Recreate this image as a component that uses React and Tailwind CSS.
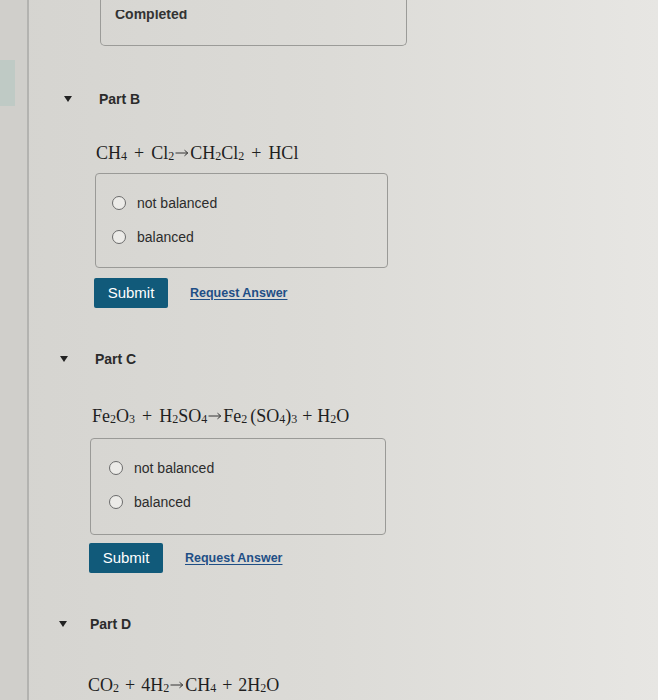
import React from "react";

const ui = { fontFamily: '"Liberation Sans", Arial, sans-serif' };
const serif = { fontFamily: '"Liberation Serif", "Times New Roman", serif' };

const Sub = ({ children }) => (
  <sub className="text-[12px] align-[-3px] leading-none">{children}</sub>
);

const Plus = ({ px = "px-[7px]" }) => <span className={px}>+</span>;

const Arrow = () => (
  <svg width="14" height="8" viewBox="0 0 14 8" className="mx-[1px] shrink-0">
    <path d="M0.5 4H12.5M9.5 1.2L12.8 4L9.5 6.8" fill="none" stroke="#222" strokeWidth="0.9" />
  </svg>
);

const Radio = ({ label }) => (
  <div className="flex items-center h-5">
    <span className="w-[14px] h-[14px] rounded-full border-[1.5px] border-[#6b6b6b] bg-[#ecebe8]" />
    <span className="ml-[11px] text-[14px] text-[#2c2c2c]">{label}</span>
  </div>
);

const Header = ({ ml, gap, mt, label }) => (
  <div className={`flex items-center h-5 ${mt} ${ml}`}>
    <span className="w-0 h-0 border-l-[4.5px] border-r-[4.5px] border-t-[6px] border-l-transparent border-r-transparent border-t-[#222]" />
    <span className={`${gap} text-[14px] font-semibold text-[#2b2b2b]`}>{label}</span>
  </div>
);

const Actions = ({ ml, mt }) => (
  <div className={`${ml} ${mt} flex items-center`}>
    <button className="w-[74px] h-[30px] bg-[#115a7a] text-white text-[15px] rounded-[2px]">
      Submit
    </button>
    <span className="ml-[22px] text-[12.5px] font-bold text-[#1f4f86] underline underline-offset-2">
      Request Answer
    </span>
  </div>
);

export default function App() {
  return (
    <div
      className="w-[658px] h-[700px] overflow-hidden flex bg-linear-to-r from-[#d5d4d0] via-[#dcdbd7] to-[#e7e6e3]"
      style={ui}
    >
      <div className="w-[27px] shrink-0 bg-[#d0cfcb] flex flex-col">
        <div className="mt-[60px] w-[15px] h-[46px] bg-[#bfcac5]" />
      </div>
      <div className="w-[2px] shrink-0 bg-[#b3b3b0]" />
      <div className="flex-1 flex flex-col">
        {/* completed box, top is cut off */}
        <div className="ml-[71px] w-[307px] h-[54px] -mt-[8px] border border-t-0 border-[#9b9b98] rounded-b-[5px] pl-[14px] pt-[18px]">
          <div className="h-[13px] overflow-hidden">
            <div className="-mt-[4px] text-[14px] leading-[17px] font-semibold text-[#333]">Completed</div>
          </div>
        </div>

        {/* Part B */}
        <Header ml="ml-[35px]" gap="ml-[27px]" mt="mt-[43px]" label="Part B" />
        <div className="ml-[67px] mt-[32px] h-6 flex items-center text-[18px] text-[#1f1f1f]" style={serif}>
          CH<Sub>4</Sub>
          <Plus />
          Cl<Sub>2</Sub>
          <Arrow />
          CH<Sub>2</Sub>Cl<Sub>2</Sub>
          <Plus />
          HCl
        </div>
        <div className="ml-[66px] mt-[8px] w-[293px] h-[95px] border border-[#9a9a97] rounded-[4px] pl-[16px] pt-[19px] flex flex-col gap-[14px]">
          <Radio label="not balanced" />
          <Radio label="balanced" />
        </div>
        <Actions ml="ml-[65px]" mt="mt-[10px]" />

        {/* Part C */}
        <Header ml="ml-[31px]" gap="ml-[27px]" mt="mt-[41px]" label="Part C" />
        <div className="ml-[63px] mt-[35px] h-6 flex items-center text-[18px] text-[#1f1f1f]" style={serif}>
          Fe<Sub>2</Sub>O<Sub>3</Sub>
          <Plus />
          H<Sub>2</Sub>SO<Sub>4</Sub>
          <Arrow />
          Fe<Sub>2</Sub>
          <span className="ml-[3px]">(</span>SO<Sub>4</Sub>)<Sub>3</Sub>
          <Plus px="px-[5px]" />
          H<Sub>2</Sub>O
        </div>
        <div className="ml-[61px] mt-[10px] w-[296px] h-[97px] border border-[#9a9a97] rounded-[4px] pl-[18px] pt-[19px] flex flex-col gap-[14px]">
          <Radio label="not balanced" />
          <Radio label="balanced" />
        </div>
        <Actions ml="ml-[60px]" mt="mt-[8px]" />

        {/* Part D */}
        <Header ml="ml-[30px]" gap="ml-[23px]" mt="mt-[41px]" label="Part D" />
        <div className="ml-[59px] mt-[39px] h-6 flex items-center text-[18px] text-[#1f1f1f]" style={serif}>
          CO<Sub>2</Sub>
          <Plus px="px-[6px]" />
          4H<Sub>2</Sub>
          <Arrow />
          CH<Sub>4</Sub>
          <Plus px="px-[6px]" />
          2H<Sub>2</Sub>O
        </div>
      </div>
    </div>
  );
}
